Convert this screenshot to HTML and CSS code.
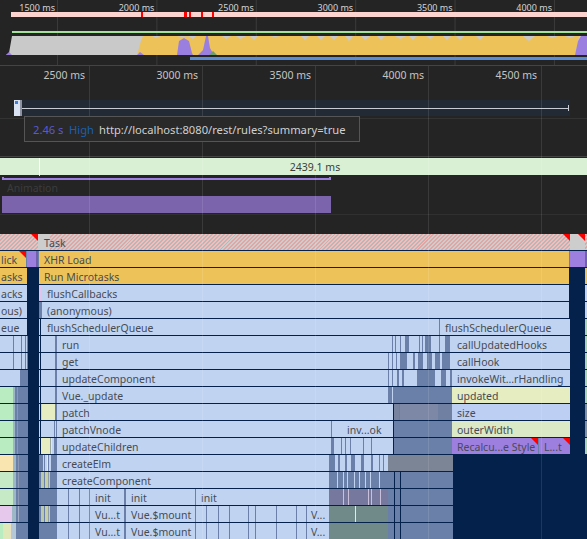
FILE: index.html
```html
<!DOCTYPE html>
<html lang="en">
<head>
<meta charset="utf-8">
<title>Performance</title>
<link rel="stylesheet" href="styles.css">
</head>
<body>
<div class="page">
  <section class="overview">
    <div class="ruler ruler-small">
      <span>1500 ms</span><span>2000 ms</span><span>2500 ms</span><span>3000 ms</span><span>3500 ms</span><span>4000 ms</span>
    </div>
    <div class="fps"></div>
    <div class="greenline"></div>
    <svg class="cpu" viewBox="0 0 587 20" width="587" height="20">
      <path fill="#c9c9c9" d="M6 20L9 18L12 1H587V20Z"/>
      <path fill="#9b7fe0" d="M6 20L9 17L12 20Z"/>
      <path fill="#edc359" d="M137 20L141 6L143 1H152L156 3L160 1H177L182 2L188 1L193 4L196 1H222L226 4L231 1L236 1L240 4L246 1H250L254 5L258 1H270L275 2L280 1H301L305 5L309 1H317L321 5L325 1H330L334 5L338 1H345L349 6L353 1H361L365 5L370 1H377L381 5L385 1H395L400 4L406 1H409L413 5L417 1H426L430 4L434 1H443L447 5L451 1H456L460 5L464 1H471L476 1L480 5L484 1H523L529 6L535 1H547L552 3L558 1H565L570 3L575 1H579L575 20Z"/>
      <path fill="#9b7fe0" d="M137 20L140 17L144 20ZM177 20L179 6L184 3L189 6L192 18L193 20ZM198 20L203 15L206 1L208 1L210 13L214 20ZM575 20L578 6L581 1H587V20Z"/>
      <path fill="#6f9f6f" d="M209 20L213 16L217 20Z"/>
    </svg>
    <div class="netbar"></div>
  </section>
  <div class="overlay-grid"></div>
  <div class="ruler ruler-main">
    <span>2500 ms</span><span>3000 ms</span><span>3500 ms</span><span>4000 ms</span><span>4500 ms</span>
  </div>
  <div class="track">
    <div class="handle"><b></b></div>
    <div class="wire"></div>
    <div class="wire-end"></div>
  </div>
  <div class="tooltip"><span class="t-time">2.46 s</span><span class="t-prio">High</span><span class="t-url">http://localhost:8080/rest/rules?summary=true</span></div>
  <div class="spacer"></div>
  <div class="frame-bar"><span>2439.1 ms</span></div>
  <div class="frame-tick"></div>
  <div class="bracket"></div>
  <div class="anim-label">Animation</div>
  <div class="anim-bar"></div>
  <div class="anim-rule"></div>

  <main class="flame">
    <div class="row">
      <div class="c hatch cor" style="width:38px"></div><div class="c gy" style="width:1px"></div>
      <div class="c hatch cor task" style="width:531px">Task</div><div class="c gy cor" style="width:15px"></div><div class="c hatch" style="width:2px"></div>
    </div>
    <div class="row">
      <div class="c y cor lt" style="width:26px">lick</div><div class="c s" style="width:1px"></div><div class="c p" style="width:9px"></div><div class="c pd" style="width:2px"></div><div class="c s" style="width:1px"></div>
      <div class="c y" style="width:530px">XHR Load</div><div class="c s" style="width:1px"></div><div class="c p" style="width:15px"></div><div class="c pd" style="width:2px"></div>
    </div>
    <div class="row">
      <div class="c y lt" style="width:27px">asks</div><div class="c n" style="width:12px"></div>
      <div class="c y" style="width:530px">Run Microtasks</div><div class="c n" style="width:16px"></div><div class="c y" style="width:2px"></div>
    </div>
    <div class="row">
      <div class="c b lt" style="width:27px">acks</div><div class="c n" style="width:12px"></div>
      <div class="c pk2" style="width:2px"></div><div class="c b tp" style="width:528px">flushCallbacks</div><div class="c n" style="width:16px"></div><div class="c b" style="width:2px"></div>
    </div>
    <div class="row">
      <div class="c b lt" style="width:27px">ous)</div><div class="c n" style="width:12px"></div>
      <div class="c s" style="width:3px"></div><div class="c b" style="width:527px">(anonymous)</div><div class="c n" style="width:16px"></div><div class="c b" style="width:2px"></div>
    </div>
    <div class="row">
      <div class="c b lt" style="width:27px">eue</div><div class="c n" style="width:12px"></div>
      <div class="c b" style="width:1px"></div><div class="c n" style="width:1px"></div><div class="c b tp" style="width:398px">flushSchedulerQueue</div><div class="c s" style="width:1px"></div><div class="c b" style="width:130px">flushSchedulerQueue</div><div class="c n" style="width:15px"></div><div class="c g" style="width:2px"></div>
    </div>

    <div class="row"><div class="c zl l1"></div><div class="c n zn"></div><div class="c zm m1"></div><div class="c b zb">run</div><div class="c zs st1"></div><div class="c b zr">callUpdatedHooks</div><div class="c n zg"></div><div class="c g ze"></div></div>
    <div class="row"><div class="c zl l1"></div><div class="c n zn"></div><div class="c zm m1"></div><div class="c b zb">get</div><div class="c zs st2"></div><div class="c b zr">callHook</div><div class="c n zg"></div><div class="c g ze"></div></div>
    <div class="row"><div class="c zl l2"></div><div class="c n zn"></div><div class="c zm m1"></div><div class="c b zb">updateComponent</div><div class="c zs st3"></div><div class="c b zr">invokeWit...rHandling</div><div class="c n zg"></div><div class="c g ze"></div></div>
    <div class="row"><div class="c zl l3"></div><div class="c n zn"></div><div class="c zm m1"></div><div class="c b zb">Vue._update</div><div class="c zs st4"></div><div class="c ye zr">updated</div><div class="c n zg"></div><div class="c g ze"></div></div>
    <div class="row"><div class="c zl l3"></div><div class="c n zn"></div><div class="c zm m2"></div><div class="c b zb">patch</div><div class="c zs st5"></div><div class="c b2 zr">size</div><div class="c n zg"></div><div class="c sd ze"></div></div>
    <div class="row"><div class="c zl l3"></div><div class="c n zn"></div><div class="c zm m3"></div><div class="c b" style="width:274px">patchVnode</div><div class="c s" style="width:1px"></div><div class="c b tinv" style="width:56px">inv...ok</div><div class="c zs st6"></div><div class="c gn zr">outerWidth</div><div class="c n zg"></div><div class="c sd ze"></div></div>
    <div class="row"><div class="c zl l3"></div><div class="c n zn"></div><div class="c zm m4"></div><div class="c b" style="width:274px">updateChildren</div><div class="c st7" style="width:57px"></div><div class="c zs st6"></div><div class="c p cor" style="width:86px">Recalcu...e Style</div><div class="c s" style="width:1px"></div><div class="c p cor" style="width:31px">L...t</div><div class="c n zg"></div><div class="c g ze"></div></div>

    <div class="row"><div class="c zl l4"></div><div class="c n zn"></div><div class="c zm m5"></div><div class="c b zc">createElm</div><div class="c zd st8"></div><div class="c zt gy2"></div><div class="c n zf"></div></div>
    <div class="row"><div class="c zl l5"></div><div class="c n zn"></div><div class="c zm m6"></div><div class="c b zc">createComponent</div><div class="c zd st9"></div><div class="c zt st10"></div><div class="c n zf"></div></div>
    <div class="row"><div class="c zl l5"></div><div class="c n zn"></div><div class="c zm s"></div>
      <div class="c b" style="width:11px"></div><div class="c s" style="width:1px"></div><div class="c b" style="width:10px"></div><div class="c s" style="width:1px"></div><div class="c b" style="width:9px"></div><div class="c s" style="width:1px"></div><div class="c b" style="width:34px">init</div><div class="c s" style="width:2px"></div><div class="c b" style="width:69px">init</div><div class="c s" style="width:1px"></div><div class="c b" style="width:133px">init</div>
      <div class="c zd st11"></div><div class="c zt st10"></div><div class="c n zf"></div></div>
    <div class="row"><div class="c zl l6"></div><div class="c n zn"></div><div class="c zm m6"></div>
      <div class="c b" style="width:11px"></div><div class="c s" style="width:1px"></div><div class="c b" style="width:10px"></div><div class="c s" style="width:1px"></div><div class="c b" style="width:9px"></div><div class="c s" style="width:1px"></div><div class="c b" style="width:34px">Vu...t</div><div class="c s" style="width:2px"></div><div class="c b" style="width:69px">Vue.$mount</div><div class="c s" style="width:1px"></div><div class="c b" style="width:10px"></div><div class="c s" style="width:1px"></div><div class="c b" style="width:11px"></div><div class="c s" style="width:1px"></div><div class="c b" style="width:10px"></div><div class="c s" style="width:1px"></div><div class="c b" style="width:18px"></div><div class="c s" style="width:1px"></div><div class="c b" style="width:6px"></div><div class="c s" style="width:1px"></div><div class="c b" style="width:20px"></div><div class="c s" style="width:1px"></div><div class="c b" style="width:19px"></div><div class="c s" style="width:1px"></div><div class="c b" style="width:9px"></div><div class="c s" style="width:1px"></div><div class="c b tv" style="width:22px">V...</div>
      <div class="c zd st12"></div><div class="c zt st10"></div><div class="c n zf"></div></div>
    <div class="row"><div class="c zl l7"></div><div class="c n zn"></div><div class="c zm s"></div>
      <div class="c b" style="width:11px"></div><div class="c s" style="width:1px"></div><div class="c b" style="width:10px"></div><div class="c s" style="width:1px"></div><div class="c b" style="width:9px"></div><div class="c s" style="width:1px"></div><div class="c b" style="width:34px">Vu...t</div><div class="c s" style="width:2px"></div><div class="c b" style="width:69px">Vue.$mount</div><div class="c s" style="width:1px"></div><div class="c b" style="width:10px"></div><div class="c s" style="width:1px"></div><div class="c b" style="width:11px"></div><div class="c s" style="width:1px"></div><div class="c b" style="width:10px"></div><div class="c s" style="width:1px"></div><div class="c b" style="width:18px"></div><div class="c s" style="width:1px"></div><div class="c b" style="width:6px"></div><div class="c s" style="width:1px"></div><div class="c b" style="width:20px"></div><div class="c s" style="width:1px"></div><div class="c b" style="width:19px"></div><div class="c s" style="width:1px"></div><div class="c b" style="width:9px"></div><div class="c s" style="width:1px"></div><div class="c b tv" style="width:22px">V...</div>
      <div class="c zd s4"></div><div class="c zt st10"></div><div class="c n zf"></div></div>
  </main>
</div>
</body>
</html>
```

FILE: styles.css
```css
* { box-sizing: border-box; }
html, body { margin: 0; padding: 0; }
:root { --b: #c0d4f2; --s: #6a80a8; --n: #03214a; }
body {
  width: 587px;
  height: 539px;
  overflow: hidden;
  background: #242424;
  font-family: "Noto Sans", "Open Sans", sans-serif;
}
.page { position: relative; width: 587px; height: 539px; overflow: hidden; }

.overview {
  height: 66px;
  border-bottom: 1px solid #444;
  background: linear-gradient(90deg, #3a3a3a 1px, transparent 1px) 57px 0 / 99.4px 100%;
}
.ruler { display: flex; white-space: nowrap; color: #c4c4c4; }
.ruler span { flex: none; text-align: right; }
.ruler-small { height: 12px; margin-left: -42.4px; font-size: 9px; line-height: 15px; color: #d4d4d4; }
.ruler-small span { width: 99.4px; padding-right: 2px; }
.ruler-main { height: 34px; margin-left: -24px; font-size: 10.5px; line-height: 18px; }
.ruler-main span { width: 113px; padding-right: 4px; }

.fps {
  height: 5px;
  margin-left: 11px;
  background: linear-gradient(90deg, #fcd3ce 130px, #f00 130px 132px, #fcd3ce 132px 173px, #f00 173px 176px, #fcd3ce 176px 178px, #f00 178px 180px, #fcd3ce 180px 190px, #f00 190px 192px, #fcd3ce 192px 201px, #f00 201px 203px, #fcd3ce 203px);
}
.greenline {
  height: 2px;
  margin: 14px 0 0 12px;
  background: #a3e29a;
}
.cpu { display: block; margin-top: 2px; }
.netbar { height: 3px; margin: 2px 0 0 190px; background: #5b8bd0; }

.overlay-grid {
  position: absolute;
  left: 0;
  right: 0;
  top: 66px;
  bottom: 0;
  z-index: 3;
  pointer-events: none;
  background: linear-gradient(90deg, rgba(255,255,255,.10) 1px, transparent 1px) 89px 0 / 113px 100%;
}

.track { display: flex; align-items: center; width: 556px; height: 16px; margin-left: 14px; background: #222a36; }
.handle { flex: none; width: 8px; height: 16px; background: linear-gradient(90deg, #d9e2f2 6px, #8d93a0 6px); padding: 1px; }
.handle b { display: block; width: 3px; height: 3px; background: #3f7fe0; }
.wire { flex: 1; height: 1px; background: #c9ccd2; }
.wire-end { flex: none; width: 1px; height: 6px; margin-right: 1px; background: #c9ccd2; }

.tooltip {
  position: absolute;
  left: 24px;
  top: 116px;
  z-index: 4;
  display: flex;
  align-items: center;
  width: 336px;
  height: 26px;
  padding-left: 8px;
  border: 1px solid #555;
  background: #292929;
  font-size: 11.2px;
  white-space: nowrap;
}
.t-time { width: 36px; color: #5a5ad0; }
.t-prio { width: 30px; color: #1c5fb0; }
.t-url { color: #d0d0d0; }

.spacer { height: 39px; margin-top: 2px; border-top: 1px solid #333; border-bottom: 1px solid #444; }
.frame-bar {
  width: 630px;
  height: 17px;
  margin-top: 1px;
  text-align: center;
  font-size: 10.5px;
  line-height: 19px;
  color: #3a4038;
  background: linear-gradient(90deg, transparent 39px, #fff 39px, #fff 40px, transparent 40px), #d9f0d5;
}
.frame-tick { width: 1px; height: 1px; margin-left: 39px; background: #ddd; }
.bracket {
  width: 329px;
  height: 3px;
  margin: 1px 0 0 2px;
  border: solid #9a7fe0;
  border-width: 0 2px 2px;
}
.anim-label { height: 16px; padding-left: 7px; font-size: 10.5px; line-height: 16px; color: #3c3c3c; }
.anim-bar { width: 329px; height: 17px; margin-left: 2px; background: #7b64ac; }
.anim-rule { height: 1px; margin-top: 1px; background: #303030; }

.flame {
  display: flex;
  flex-direction: column;
  gap: 1px;
  height: 304px;
  margin-top: 19px;
  background: var(--n);
}
.row { display: flex; flex: none; width: 587px; height: 16px; overflow: hidden; }
.c {
  flex: none;
  height: 16px;
  padding-left: 5px;
  overflow: hidden;
  white-space: nowrap;
  font-size: 10.5px;
  line-height: 18px;
  color: #474b53;
}
.c:empty { padding: 0; }
.c.lt { padding-left: 1px; }
.c.tp { padding-left: 6px; }
.c.tinv { padding-left: 15px; }
.c.tv { padding-left: 4px; }

/* column zones of the flame chart */
.zl { width: 28px; }
.zn { width: 11px; }
.zm { width: 18px; }
.zb { width: 331px; }
.zs { width: 64px; }
.zr { width: 118px; }
.zg { width: 15px; }
.ze { width: 2px; }
.zc { width: 272px; }
.zd { width: 59px; }
.zt { width: 65px; }
.zf { width: 135px; }

.y { background-color: #edc359; }
.b { background: var(--b); }
.b2 { background: #bdcff3; }
.s { background: var(--s); }
.s4 { background: #6f8a88; }
.sd { background: #7f8fa5; }
.n { background: var(--n); }
.p { background-color: #9d7fe0; }
.pd { background: #7360ad; }
.g { background: #a8d4b0; }
.gy { background-color: #cdcdcd; }
.gy2 { background: #7c8596; }
.pk2 { background: #e2c4ec; }
.ye { background: #e6edc1; }
.gn { background: #dce9c6; }

/* left clipped column */
.l1 { background: linear-gradient(90deg, var(--b) 13px, var(--s) 13px 14px, var(--b) 14px 21px, var(--s) 21px 22px, var(--b) 22px 25px, var(--s) 25px 26px, var(--b) 26px 27px, var(--s) 27px); }
.l2 { background: linear-gradient(90deg, var(--b) 20px, var(--s) 20px); }
.l3 { background: linear-gradient(90deg, #b9ecc0 13px, #9db7c6 13px 15px, var(--s) 15px 17px, #8a97b5 17px 18px, var(--s) 18px); }
.l4 { background: linear-gradient(90deg, #f9e5b0 13px, #9db7c6 13px 16px, var(--s) 16px 18px, #8a97b5 18px 19px, var(--s) 19px); }
.l5 { background: linear-gradient(90deg, #c6eac6 13px, #9db7c6 13px 16px, var(--s) 16px 18px, #8a97b5 18px 19px, var(--s) 19px); }
.l6 { background: linear-gradient(90deg, #e5c8ec 12px, #9db7c6 12px 16px, var(--s) 16px 18px, #a0adc8 18px 19px, var(--s) 19px); }
.l7 { background: linear-gradient(90deg, #b9ecc0 3px, #dfe8b8 3px 9px, #e8e0c0 9px 11px, #b5c8d8 11px 16px, var(--s) 16px); }

/* the short column between the gap and the main blocks */
.m1 { background: linear-gradient(90deg, var(--b) 1px, var(--n) 1px 2px, var(--b) 2px 16px, var(--s) 16px); }
.m2 { background: linear-gradient(90deg, var(--b) 1px, var(--n) 1px 2px, var(--b) 2px 3px, #e6edc1 3px 16px, var(--s) 16px); }
.m3 { background: linear-gradient(90deg, var(--b) 1px, var(--n) 1px 2px, var(--b) 2px 15px, var(--s) 15px 16px, var(--b) 16px 17px, var(--s) 17px); }
.m4 { background: linear-gradient(90deg, var(--b) 1px, var(--n) 1px 2px, #e6edc1 2px 11px, #9aa6a0 11px 12px, #e6edc1 12px 13px, var(--b) 13px 15px, var(--s) 15px); }
.m5 { background: linear-gradient(90deg, var(--s) 4px, var(--b) 4px 5px, var(--s) 5px 6px, var(--b) 6px 8px, #dfe8f8 8px 9px, var(--s) 9px 10px, var(--b) 10px 12px, var(--s) 12px); }
.m6 { background: linear-gradient(90deg, var(--s) 2px, #b9c9a9 2px 5px, var(--s) 5px 6px, #c7cfa6 6px 9px, #8f9ea4 9px 10px, #c7cfa6 10px 11px, var(--s) 11px); }

/* dense runs of very short calls */
.st1 { background: linear-gradient(90deg, var(--b) 4px, var(--s) 4px 5px, var(--b) 5px 7px, var(--s) 7px 8px, var(--b) 8px 12px, var(--s) 12px 13px, var(--b) 13px 17px, var(--s) 17px 21px, var(--b) 21px 31px, var(--s) 31px 32px, var(--b) 32px 34px, var(--s) 34px 35px, var(--b) 35px 37px, var(--s) 37px 43px, var(--b) 43px 51px, var(--s) 51px 52px, var(--b) 52px 57px, var(--s) 57px 62px, var(--b) 62px); }
.st2 { background: linear-gradient(90deg, var(--s) 1px, var(--b) 1px 4px, var(--s) 4px 5px, var(--b) 5px 8px, var(--s) 8px 9px, var(--b) 9px 12px, var(--s) 12px 19px, var(--b) 19px 25px, var(--s) 25px 27px, var(--b) 27px 30px, var(--s) 30px 35px, var(--b) 35px 39px, var(--s) 39px 44px, var(--b) 44px 47px, var(--s) 47px 52px, var(--b) 52px 54px, var(--s) 54px 62px, var(--b) 62px); }
.st3 { background: linear-gradient(90deg, var(--s) 1px, var(--b) 1px 4px, var(--s) 4px 5px, var(--b) 5px 9px, var(--s) 9px 11px, var(--b) 11px 14px, var(--s) 14px 16px, var(--b) 16px 29px, var(--s) 29px 47px, var(--b) 47px 53px, var(--s) 53px 58px, var(--b) 58px 62px, var(--s) 62px); }
.st4 { background: linear-gradient(90deg, var(--s) 4px, var(--b) 4px 5px, var(--s) 5px); }
.st5 { background: linear-gradient(90deg, var(--b) 5px, var(--n) 5px 6px, #78839f 6px 11px, #8a7d60 11px 12px, #7d87a6 12px 40px, #7d87a6 40px 50px, #6f80a2 50px); }
.st6 { background: linear-gradient(90deg, var(--b) 5px, var(--n) 5px 6px, var(--s) 6px); }
.st7 { background: linear-gradient(90deg, var(--s) 3px, var(--b) 3px 10px, var(--s) 10px 11px, var(--b) 11px 14px, var(--s) 14px 15px, var(--b) 15px 19px, var(--s) 19px 20px, var(--b) 20px 32px, var(--s) 32px 33px, var(--b) 33px 40px, var(--s) 40px 41px, var(--b) 41px); }
.st8 { background: linear-gradient(90deg, var(--s) 6px, var(--b) 6px 9px, var(--s) 9px 11px, var(--b) 11px 16px, var(--s) 16px 18px, var(--b) 18px 22px, var(--s) 22px 26px, var(--b) 26px 32px, var(--s) 32px 35px, var(--b) 35px 42px, var(--s) 42px 44px, var(--b) 44px 50px, var(--s) 50px 51px, var(--b) 51px 54px, var(--s) 54px 55px, var(--b) 55px); }
.st9 { background: linear-gradient(90deg, var(--s) 8px, var(--b) 8px 9px, var(--s) 9px 14px, var(--b) 14px 15px, var(--s) 15px 18px, var(--b) 18px 19px, var(--s) 19px 25px, var(--b) 25px 26px, var(--s) 26px 30px, var(--b) 30px 31px, var(--s) 31px 36px, var(--b) 36px 37px, var(--s) 37px 41px, var(--b) 41px 42px, var(--s) 42px 50px, var(--b) 50px 51px, var(--s) 51px); }
.st10 { background: linear-gradient(90deg, var(--s) 6px, var(--n) 6px 7px, var(--s) 7px 12px, var(--n) 12px 13px, var(--s) 13px); }
.st11 { background: linear-gradient(90deg, #76799d 14px, #c9c0dc 14px 15px, #76799d 15px 19px, #c9c0dc 19px 20px, #76799d 20px 39px, #c9c0dc 39px 40px, #76799d 40px 42px, #c9c0dc 42px 43px, #76799d 43px 51px, #c9c0dc 51px 52px, #76799d 52px); }
.st12 { background: linear-gradient(90deg, #6f8a88 26px, #e6edc1 26px 27px, #6f8a88 27px); }

.hatch {
  background-color: #d0d0d0;
  background-image: repeating-linear-gradient(135deg, #cdcdcd 0 1.4px, #e3a4a4 1.4px 2.8px);
}
.cor { position: relative; }
.cor::after {
  content: "";
  position: absolute;
  top: 0;
  right: 0;
  width: 0;
  height: 0;
  border-top: 7px solid #f00;
  border-left: 7px solid transparent;
}
.task { background-image: linear-gradient(90deg, #cdcdcd 11px, transparent 11px), repeating-linear-gradient(135deg, #cdcdcd 0 1.4px, #e3a4a4 1.4px 2.8px); }
```
